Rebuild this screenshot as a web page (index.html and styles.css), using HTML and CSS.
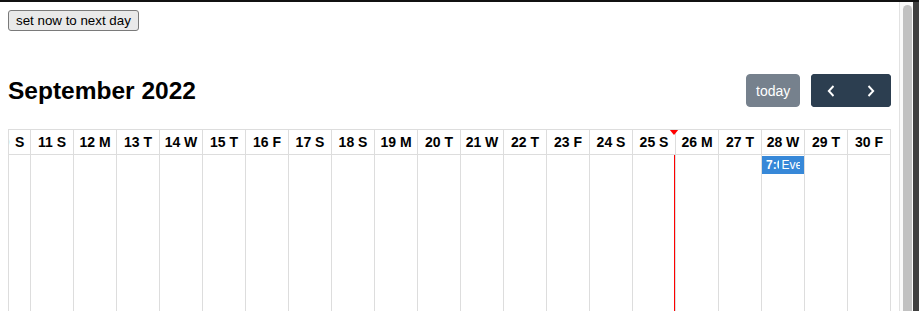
FILE: index.html
```html
<!DOCTYPE html>
<html>
<head>
<meta charset="utf-8">
<link rel="stylesheet" href="styles.css">
</head>
<body>
<div class="topband"></div>
<div class="window">
  <div class="page">
    <button class="native-btn">set now to next day</button>
    <div class="calendar">
      <div class="toolbar">
        <h2 class="title">September 2022</h2>
        <div class="actions">
          <button class="fc-btn today">today</button>
          <div class="btn-group">
            <button class="fc-btn nav" aria-label="prev">
              <svg width="8" height="12" viewBox="0 0 8 12"><path d="M6.5 1 L1.8 6 L6.5 11" fill="none" stroke="#fff" stroke-width="1.9"/></svg>
            </button>
            <button class="fc-btn nav" aria-label="next">
              <svg width="8" height="12" viewBox="0 0 8 12"><path d="M1.5 1 L6.2 6 L1.5 11" fill="none" stroke="#fff" stroke-width="1.9"/></svg>
            </button>
          </div>
        </div>
      </div>
      <div class="timeline">
        <div class="track">
          <div class="head-row">
            <div class="hcell first"><span class="cut">10</span> S</div>
            <div class="hcell">11 S</div>
            <div class="hcell">12 M</div>
            <div class="hcell">13 T</div>
            <div class="hcell">14 W</div>
            <div class="hcell">15 T</div>
            <div class="hcell">16 F</div>
            <div class="hcell">17 S</div>
            <div class="hcell">18 S</div>
            <div class="hcell">19 M</div>
            <div class="hcell">20 T</div>
            <div class="hcell">21 W</div>
            <div class="hcell">22 T</div>
            <div class="hcell">23 F</div>
            <div class="hcell">24 S</div>
            <div class="hcell">25 S</div>
            <div class="hcell">26 M</div>
            <div class="hcell">27 T</div>
            <div class="hcell">28 W</div>
            <div class="hcell">29 T</div>
            <div class="hcell">30 F</div>
          </div>
          <div class="body-row">
            <div class="bcell"></div>
            <div class="bcell"></div>
            <div class="bcell"></div>
            <div class="bcell"></div>
            <div class="bcell"></div>
            <div class="bcell"></div>
            <div class="bcell"></div>
            <div class="bcell"></div>
            <div class="bcell"></div>
            <div class="bcell"></div>
            <div class="bcell"></div>
            <div class="bcell"></div>
            <div class="bcell"></div>
            <div class="bcell"></div>
            <div class="bcell"></div>
            <div class="bcell"></div>
            <div class="bcell"></div>
            <div class="bcell"></div>
            <div class="bcell">
              <div class="event"><span class="ev-time">7:00</span><span class="ev-title">Event</span></div>
            </div>
            <div class="bcell"></div>
            <div class="bcell"></div>
          </div>
        </div>
        <div class="now-arrow"></div>
        <div class="now-line"></div>
      </div>
    </div>
  </div>
  <div class="scrollbar"><div class="thumb"></div></div>
  <div class="edge"></div>
</div>
</body>
</html>
```
FILE: styles.css
```css
html, body {
  margin: 0;
  padding: 0;
  overflow: hidden;
  background: #fff;
  font-family: "Liberation Sans", Arial, sans-serif;
}

.topband {
  height: 2px;
  background: #111;
}

.window {
  display: flex;
  height: 309px;
  overflow: hidden;
}

.page {
  width: 899px;
  flex: none;
  padding: 8px;
  box-sizing: border-box;
  overflow: hidden;
}

.native-btn {
  display: block;
  font-family: "Liberation Sans", Arial, sans-serif;
  font-size: 13.33px;
  line-height: 15px;
  color: #000;
  background: #e9e9e9;
  border: 1px solid #7a7a7a;
  border-radius: 3px;
  padding: 2px 7px;
  margin: 0;
}

.calendar {
  margin-top: 43px;
  font-size: 14px;
}

.toolbar {
  display: flex;
  align-items: center;
  justify-content: space-between;
  height: 33px;
  margin-bottom: 22px;
}

.title {
  margin: 0;
  font-size: 24.5px;
  font-weight: bold;
  line-height: 28px;
  color: #000;
}

.actions {
  display: flex;
  gap: 11px;
}

.fc-btn {
  font-family: "Liberation Sans", Arial, sans-serif;
  font-size: 14px;
  color: #fff;
  background: #2c3e50;
  border: 1px solid #2c3e50;
  height: 33px;
  margin: 0;
  cursor: pointer;
}

.today {
  background: #76818d;
  border-color: #76818d;
  border-radius: 4px;
  padding: 0 9px;
  width: 54px;
}

.btn-group {
  display: flex;
  border-radius: 4px;
  overflow: hidden;
}

.nav {
  width: 40px;
  padding: 0;
  display: flex;
  align-items: center;
  justify-content: center;
}

.nav svg {
  display: block;
}

.timeline {
  position: relative;
  border-left: 1px solid #ddd;
  border-top: 1px solid #ddd;
  overflow: hidden;
  height: 200px;
}

.track {
  margin-left: -21px;
  width: 903px;
}

.head-row, .body-row {
  display: grid;
  grid-template-columns: repeat(21, 43px);
}

.hcell {
  box-sizing: border-box;
  height: 25px;
  border-right: 1px solid #ddd;
  border-bottom: 1px solid #ddd;
  text-align: center;
  font-weight: bold;
  font-size: 14px;
  line-height: 24px;
  color: #000;
  white-space: nowrap;
}

.hcell.first .cut {
  margin-right: 2px;
}

.bcell {
  box-sizing: border-box;
  height: 180px;
  border-right: 1px solid #ddd;
  padding-top: 1px;
}

.event {
  box-sizing: border-box;
  height: 18px;
  background: #3788d8;
  border: 1px solid #3788d8;
  color: #fff;
  font-size: 12px;
  line-height: 16px;
  padding: 0 3px;
  white-space: nowrap;
  overflow: hidden;
  display: flex;
}

.ev-time {
  font-weight: bold;
  width: 12.5px;
  overflow: hidden;
  flex: none;
}

.ev-title {
  margin-left: 3px;
  flex: 1;
  min-width: 0;
  overflow: hidden;
}

.now-arrow {
  position: absolute;
  top: -1px;
  left: 660px;
  width: 0;
  height: 0;
  border-style: solid;
  border-width: 6px 5px 0 5px;
  border-color: red transparent transparent transparent;
}

.now-line {
  position: absolute;
  top: 25px;
  bottom: 0;
  left: 665px;
  width: 1px;
  background: red;
}

.scrollbar {
  width: 14px;
  flex: none;
  box-sizing: border-box;
  border-left: 1px solid #e2e2e2;
  background: #fafafa;
  padding: 3px 1px 0 3px;
}

.thumb {
  width: 9px;
  height: 100%;
  background: #c1c1c1;
  border-radius: 5px 5px 0 0;
}

.edge {
  flex: 1;
  background: #3e3e3e;
}
```
